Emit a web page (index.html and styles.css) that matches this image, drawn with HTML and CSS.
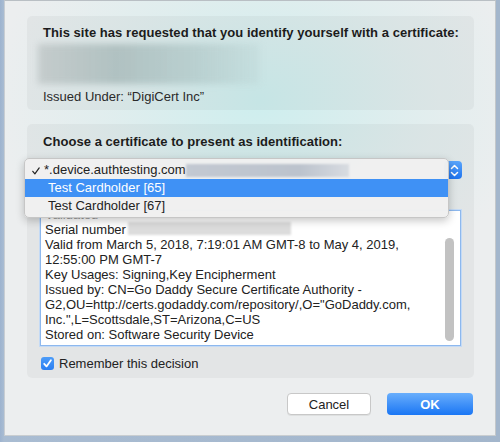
FILE: index.html
```html
<!DOCTYPE html>
<html>
<head>
<meta charset="utf-8">
<link rel="stylesheet" href="styles.css">
</head>
<body>
<div class="desktop">
  <div class="window">
    <section class="panel panel-top">
      <h2 class="panel-title">This site has requested that you identify yourself with a certificate:</h2>
      <div class="blur-id"></div>
      <p class="issued">Issued Under: “DigiCert Inc”</p>
    </section>
    <section class="panel panel-choose">
      <h2 class="panel-title">Choose a certificate to present as identification:</h2>
      <div class="select-row">
        <div class="stepper">
          <svg width="9" height="13" viewBox="0 0 9 13"><path d="M1.5 4.5 L4.5 1.5 L7.5 4.5 M1.5 8.5 L4.5 11.5 L7.5 8.5" fill="none" stroke="#fff" stroke-width="1.5" stroke-linecap="round" stroke-linejoin="round"/></svg>
        </div>
        <div class="menu">
          <div class="menu-item first">
            <svg class="check" width="8" height="8" viewBox="0 0 8 8"><path d="M0.8 4.3 L2.9 6.8 L7.2 0.9" fill="none" stroke="#222" stroke-width="1.2" stroke-linecap="round" stroke-linejoin="round"/></svg>
            <span>*.device.authtesting.com</span><span class="blur-host"></span>
          </div>
          <div class="menu-item selected"><span>Test Cardholder [65]</span></div>
          <div class="menu-item"><span>Test Cardholder [67]</span></div>
        </div>
      </div>
      <div class="details">
        <div class="details-text">
          <div class="line faded">Validated</div>
          <div class="line">Serial number <span class="blur-serial"></span></div>
          <div class="line">Valid from March 5, 2018, 7:19:01 AM GMT-8 to May 4, 2019,</div>
          <div class="line">12:55:00 PM GMT-7</div>
          <div class="line">Key Usages: Signing,Key Encipherment</div>
          <div class="line">Issued by: CN=Go Daddy Secure Certificate Authority -</div>
          <div class="line">G2,OU=http://certs.godaddy.com/repository/,O="GoDaddy.com,</div>
          <div class="line">Inc.",L=Scottsdale,ST=Arizona,C=US</div>
          <div class="line">Stored on: Software Security Device</div>
        </div>
        <div class="scrollbar"><div class="thumb"></div></div>
      </div>
      <label class="remember">
        <span class="checkbox">
          <svg width="11" height="11" viewBox="0 0 11 11"><path d="M2.2 5.8 L4.5 8.4 L8.9 2.2" fill="none" stroke="#fff" stroke-width="1.8" stroke-linecap="round" stroke-linejoin="round"/></svg>
        </span>
        <span>Remember this decision</span>
      </label>
    </section>
    <div class="buttons">
      <button class="btn cancel">Cancel</button>
      <button class="btn ok">OK</button>
    </div>
  </div>
</div>
</body>
</html>
```

FILE: styles.css
```css
* { box-sizing: border-box; }
html, body { margin: 0; padding: 0; }
body {
  width: 500px;
  height: 442px;
  overflow: hidden;
  background: #a1b4c9;
  font-family: "Liberation Sans", Arial, sans-serif;
  font-size: 13px;
  color: #222;
}
.desktop {
  height: 442px;
  padding: 0 4px 6px 4px;
  background: linear-gradient(90deg, #9db3cf 0, #a9bcd2 4px, #a3b6cc 100%);
  display: flex;
}
.window {
  flex: 1;
  height: 436px;
  border-top: 1px solid #b9bfc4;
  border-right: 1px solid #c3c7ca;
  border-left: 1px solid #c8cdd2;
  border-bottom: 1px solid #c9cdd0;
  background:
    radial-gradient(ellipse 270px 210px at 255px 100px, rgba(204, 238, 238, 0.95), rgba(216, 237, 237, 0.6) 55%, rgba(236, 238, 239, 0) 100%),
    #eceeef;
  padding: 15px 21px 0 22px;
  display: flex;
  flex-direction: column;
}
.panel {
  background: rgba(0, 0, 0, 0.035);
  border-radius: 5px;
  padding: 0 13px;
}
.panel-title {
  margin: 0 0 0 3px;
  font-size: 13px;
  font-weight: bold;
  line-height: 16px;
  color: #1c1c1c;
  letter-spacing: 0.05px;
}
.panel-top {
  height: 94px;
  padding-top: 9px;
}
.blur-id {
  margin: 3px 0 0 -2px;
  width: 222px;
  height: 40px;
  background: linear-gradient(90deg, rgba(176, 184, 184, 0.55), rgba(150, 170, 170, 0.6) 35%, rgba(166, 190, 190, 0.55) 70%, rgba(190, 215, 215, 0.4));
  filter: blur(3px);
}
.issued {
  margin: 5px 0 0 3px;
  line-height: 16px;
  color: #2a2a2a;
}
.panel-choose {
  margin-top: 14px;
  height: 254px;
  padding-top: 10px;
}
.select-row {
  position: relative;
  height: 60px;
  display: flex;
  justify-content: flex-end;
  align-items: flex-start;
  padding-top: 11px;
  margin-right: -1px;
}
.stepper {
  width: 18px;
  height: 18px;
  border-radius: 4px;
  background: linear-gradient(#5aa5fb, #1f74ef);
  display: flex;
  align-items: center;
  justify-content: flex-end;
  padding-right: 3px;
}
.menu {
  position: absolute;
  left: -16px;
  top: 8px;
  width: 425px;
  height: 60px;
  background: rgba(240, 240, 240, 0.98);
  border: 1px solid #c6c6c6;
  border-radius: 5px;
  box-shadow: 0 3px 8px rgba(0, 0, 0, 0.22);
  padding: 2px 0;
  z-index: 2;
}
.menu-item {
  position: relative;
  height: 18px;
  line-height: 18px;
  padding-left: 23px;
  color: #222;
  display: flex;
  align-items: center;
}
.menu-item.first { padding-left: 19px; }
.menu-item.selected {
  background: #3f91f5;
  color: #fff;
}
.check {
  position: absolute;
  left: 7px;
  top: 6px;
}
.blur-host {
  display: inline-block;
  width: 163px;
  height: 13px;
  background: linear-gradient(90deg, #c3c9d2, #bcc3cd 70%, #d8dce1);
  filter: blur(1.2px);
}
.details {
  position: relative;
  height: 136px;
  background: #fff;
  border: 1px solid #8db8ee;
  box-shadow: 0 0 0 1px #c4daf5;
  overflow: hidden;
}
.details-text {
  margin-top: -4px;
  padding-left: 4px;
}
.line {
  line-height: 15px;
  white-space: nowrap;
  color: #222;
}
.line.faded { color: #9a9a9a; }
.blur-serial {
  display: inline-block;
  vertical-align: -1px;
  width: 163px;
  height: 13px;
  margin-left: -2px;
  background: #dcdcdc;
  filter: blur(1px);
}
.scrollbar {
  position: absolute;
  right: 5px;
  top: 27px;
  width: 10px;
  height: 104px;
}
.thumb {
  width: 9px;
  height: 103px;
  border-radius: 5px;
  background: #c2c2c2;
}
.remember {
  display: flex;
  align-items: center;
  gap: 5px;
  margin: 11px 0 0 1px;
  height: 13px;
  color: #222;
}
.checkbox {
  width: 13px;
  height: 13px;
  border-radius: 3px;
  background: linear-gradient(#4c9cf8, #2b7ff2);
  display: flex;
  align-items: center;
  justify-content: center;
}
.buttons {
  display: flex;
  justify-content: flex-end;
  gap: 16px;
  margin-top: 15px;
  padding-right: 1px;
}
.btn {
  height: 22px;
  border-radius: 4px;
  font-family: "Liberation Sans", Arial, sans-serif;
  font-size: 13px;
  padding: 0;
}
.cancel {
  width: 84px;
  background: #fff;
  border: 1px solid #c8c8c8;
  box-shadow: 0 1px 0 rgba(0, 0, 0, 0.06);
  color: #222;
}
.ok {
  width: 86px;
  border: none;
  background: linear-gradient(#69aefc, #1a76f4);
  color: #fff;
  font-weight: bold;
}
```
